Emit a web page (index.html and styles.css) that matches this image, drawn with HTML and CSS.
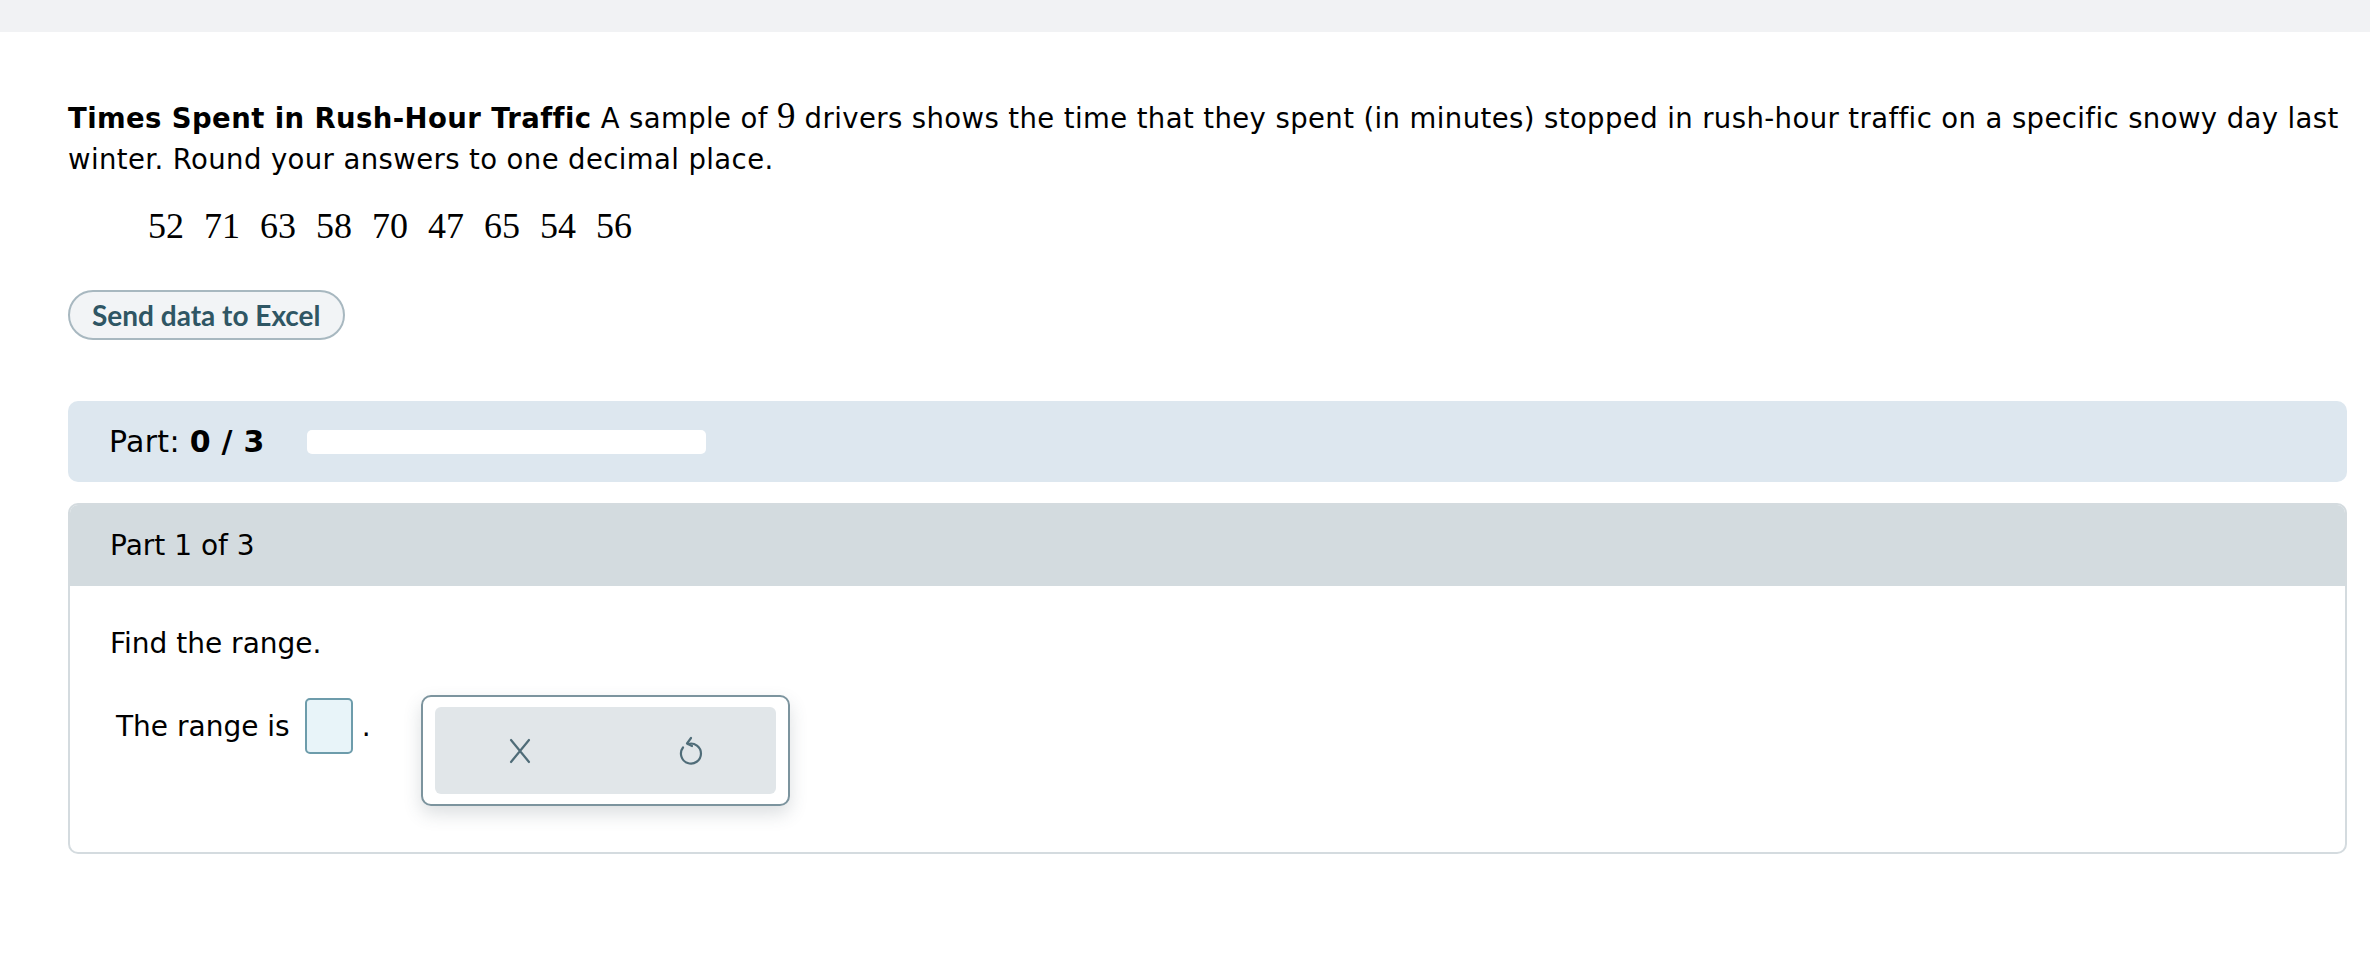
FILE: index.html
```html
<!DOCTYPE html>
<html lang="en">
<head>
    <meta charset="UTF-8">
    <title>Part 1 of 3</title>
    <link rel="stylesheet" href="styles.css">
</head>
<body>

    <div class="topbar"></div>

    <main class="page">
        <p class="intro"><b>Times Spent in Rush-Hour Traffic</b> A sample of <span class="math">9</span> drivers shows the time that they spent (in minutes) stopped in rush-hour traffic on a specific snowy day last<br>winter. Round your answers to one decimal place.</p>

        <div class="data">
            <span>52</span><span>71</span><span>63</span><span>58</span><span>70</span><span>47</span><span>65</span><span>54</span><span>56</span>
        </div>

        <button class="excel">Send data to Excel</button>

        <div class="progress">
            <span>Part: <b>0 / 3</b></span>
            <div class="track"></div>
        </div>

        <section class="card">
            <header class="card-head">Part 1 of 3</header>
            <div class="card-body">
                <p class="question">Find the range.</p>

                <div class="answer-row">
                    <div class="answer">
                        <span>The range is</span>
                        <span class="input"></span>
                        <span>.</span>
                    </div>

                    <!-- answer tools popover -->
                    <div class="keypad">
                        <div class="keys">
                            <button class="key" title="Clear">
                                <svg width="26" height="28" viewBox="0 0 26 28" fill="none" stroke="#4f6c78" stroke-width="2.2" stroke-linecap="round">
                                    <path d="M4 3 L22 25 M22 3 L4 25"/>
                                </svg>
                            </button>
                            <button class="key" title="Undo">
                                <svg width="26" height="32" viewBox="0 0 26 32" fill="none" stroke="#4f6c78" stroke-width="2.2" stroke-linecap="round" stroke-linejoin="round">
                                    <path d="M10 9 A10 10 0 1 1 5 12.5"/>
                                    <path d="M13 3 L9 8.5 L14 11"/>
                                </svg>
                            </button>
                        </div>
                    </div>
                </div>
            </div>
        </section>
    </main>

</body>
</html>
```

FILE: styles.css
```css
body {
    margin: 0;
    font-family: "DejaVu Sans", Verdana, sans-serif;
    font-size: 28px;
    color: #000;
    background-color: #fff;
}

.topbar {
    height: 32px;
    background-color: #f1f2f4;
}

.page {
    padding: 66px 23px 40px 68px;
}

.intro {
    margin: 0;
    font-size: 27.5px;
    line-height: 41px;
    letter-spacing: 0.4px;
}

.math {
    font-family: "Liberation Serif", "Times New Roman", serif;
    font-size: 37px;
    line-height: 0;
    letter-spacing: 0;
}

.data {
    margin: 21px 0 0 80px;
    font-family: "Liberation Serif", "Times New Roman", serif;
    font-size: 36px;
    line-height: 50px;
    display: flex;
    gap: 20px;
}

.excel {
    margin-top: 39px;
    height: 50px;
    padding: 0 22px;
    font-family: Lato, "Open Sans", sans-serif;
    font-weight: bold;
    font-size: 28px;
    color: #2f5664;
    background-color: #f2f4f6;
    border: 2px solid #a8b8c0;
    border-radius: 25px;
}

.progress {
    margin-top: 61px;
    height: 81px;
    display: flex;
    align-items: center;
    gap: 42px;
    padding-left: 41px;
    font-size: 30px;
    letter-spacing: 0.3px;
    background-color: #dde7ef;
    border-radius: 10px;
}

.progress b {
    font-weight: bold;
}

.track {
    width: 399px;
    height: 24px;
    background-color: #fff;
    border-radius: 5px;
}

.card {
    margin-top: 21px;
    border: 2px solid #d4dbdf;
    border-radius: 10px;
    overflow: hidden;
}

.card-head {
    height: 81px;
    display: flex;
    align-items: center;
    padding-left: 40px;
    background-color: #d3dbdf;
}

.card-body {
    padding: 40px 40px 46px 40px;
}

.question {
    margin: 0;
    line-height: 36px;
}

.answer-row {
    margin-top: 33px;
    display: flex;
    align-items: flex-start;
}

.answer {
    display: flex;
    align-items: center;
    gap: 15px;
    padding: 3px 0 0 6px;
}

.answer span:last-child {
    margin-left: -6px;
}

.input {
    width: 44px;
    height: 52px;
    background-color: #e8f4f9;
    border: 2px solid #6d9cab;
    border-radius: 5px;
}

.keypad {
    margin-left: 50px;
    padding: 10px 12px;
    width: 341px;
    background-color: #fff;
    border: 2px solid #7c949e;
    border-radius: 10px;
    box-shadow: 0 8px 18px rgba(60, 80, 90, 0.18);
}

.keys {
    height: 87px;
    display: flex;
    align-items: center;
    justify-content: space-between;
    padding: 0 72px;
    background-color: #e1e6e9;
    border-radius: 6px;
}

.key {
    border: none;
    background: none;
    padding: 0;
    cursor: pointer;
    display: flex;
}
```
